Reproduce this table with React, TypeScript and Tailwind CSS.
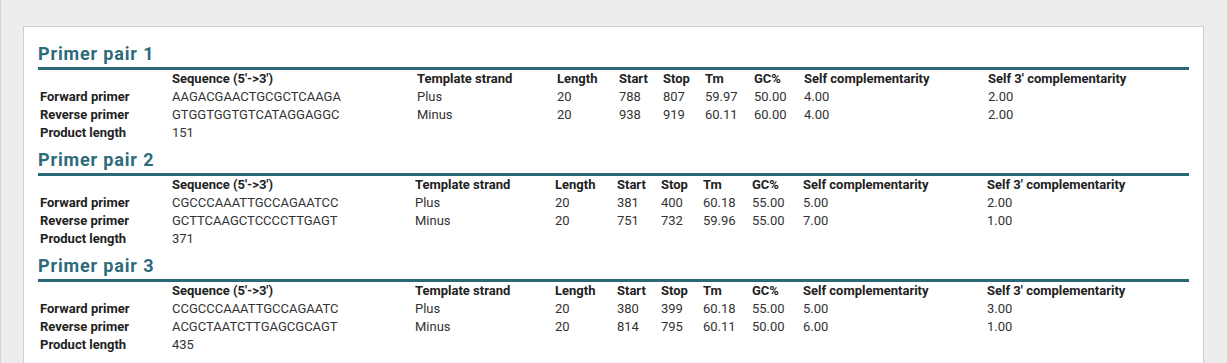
import React from "react";

interface Primer {
  label: string;
  seq: string;
  strand: string;
  length: string;
  start: string;
  stop: string;
  tm: string;
  gc: string;
  self: string;
  self3: string;
}

interface Pair {
  id: number;
  cols: string;
  primers: Primer[];
  product: string;
}

const pairs: Pair[] = [
  {
    id: 1,
    cols: "grid-cols-[132px_245px_140px_62px_44px_42px_49px_50px_184px_1fr]",
    primers: [
      { label: "Forward primer", seq: "AAGACGAACTGCGCTCAAGA", strand: "Plus", length: "20", start: "788", stop: "807", tm: "59.97", gc: "50.00", self: "4.00", self3: "2.00" },
      { label: "Reverse primer", seq: "GTGGTGGTGTCATAGGAGGC", strand: "Minus", length: "20", start: "938", stop: "919", tm: "60.11", gc: "60.00", self: "4.00", self3: "2.00" },
    ],
    product: "151",
  },
  {
    id: 2,
    cols: "grid-cols-[132px_243px_140px_62px_44px_42px_49px_51px_184px_1fr]",
    primers: [
      { label: "Forward primer", seq: "CGCCCAAATTGCCAGAATCC", strand: "Plus", length: "20", start: "381", stop: "400", tm: "60.18", gc: "55.00", self: "5.00", self3: "2.00" },
      { label: "Reverse primer", seq: "GCTTCAAGCTCCCCTTGAGT", strand: "Minus", length: "20", start: "751", stop: "732", tm: "59.96", gc: "55.00", self: "7.00", self3: "1.00" },
    ],
    product: "371",
  },
  {
    id: 3,
    cols: "grid-cols-[132px_243px_140px_62px_44px_42px_49px_51px_184px_1fr]",
    primers: [
      { label: "Forward primer", seq: "CCGCCCAAATTGCCAGAATC", strand: "Plus", length: "20", start: "380", stop: "399", tm: "60.18", gc: "55.00", self: "5.00", self3: "3.00" },
      { label: "Reverse primer", seq: "ACGCTAATCTTGAGCGCAGT", strand: "Minus", length: "20", start: "814", stop: "795", tm: "60.11", gc: "50.00", self: "6.00", self3: "1.00" },
    ],
    product: "435",
  },
];

const headers = ["", "Sequence (5'->3')", "Template strand", "Length", "Start", "Stop", "Tm", "GC%", "Self complementarity", "Self 3' complementarity"];

const PairTable = ({ pair }: { pair: Pair }) => {
  return (
    <div className="mt-[7px]">
      <h2 className="text-[18px] leading-[22px] font-bold tracking-[0.85px] text-[#2d6b7b] pb-[2px] border-b-[3px] border-[#2b6878]">
        Primer pair {pair.id}
      </h2>
      <div className={`grid ${pair.cols} text-[13px] leading-[18px] text-[#333]`}>
        {headers.map((h, i) => (
          <div key={i} className="pl-[2px] font-bold text-[#222] whitespace-nowrap">{h}</div>
        ))}
        {pair.primers.map((p) => (
          <React.Fragment key={p.label}>
            <div className="pl-[2px] font-bold text-[#222] whitespace-nowrap">{p.label}</div>
            <div className="pl-[2px]">{p.seq}</div>
            <div className="pl-[2px]">{p.strand}</div>
            <div className="pl-[2px]">{p.length}</div>
            <div className="pl-[2px]">{p.start}</div>
            <div className="pl-[2px]">{p.stop}</div>
            <div className="pl-[2px]">{p.tm}</div>
            <div className="pl-[2px]">{p.gc}</div>
            <div className="pl-[2px]">{p.self}</div>
            <div className="pl-[2px]">{p.self3}</div>
          </React.Fragment>
        ))}
        <div className="pl-[2px] font-bold text-[#222] whitespace-nowrap">Product length</div>
        <div className="pl-[2px] col-span-9">{pair.product}</div>
      </div>
    </div>
  );
};

export default function App() {
  return (
    <div className="h-[363px] overflow-hidden bg-[#ededed] border-l border-[#d4d4d4] font-['Roboto',sans-serif]">
      <div className="flex items-start h-full">
        <div className="ml-[22px] mt-[26px] w-[1181px] shrink-0 bg-white border border-[#cfcfcf] px-[14px] pt-[9px] pb-10">
          {pairs.map((pair) => (
            <PairTable key={pair.id} pair={pair} />
          ))}
        </div>
        <div className="flex-1" />
        <div className="w-px h-full bg-[#d6d6d6]" />
      </div>
    </div>
  );
}
